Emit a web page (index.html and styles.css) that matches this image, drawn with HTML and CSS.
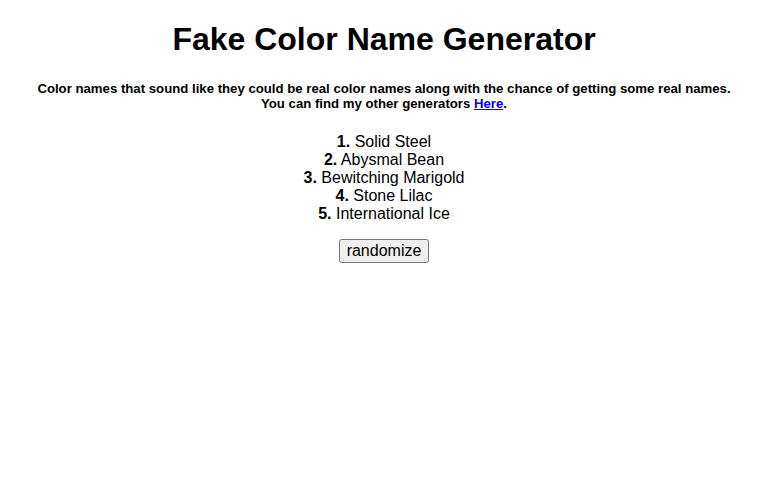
FILE: index.html
```html
<!DOCTYPE html>
<html lang="en">
<head>
  <meta charset="UTF-8">
  <meta name="viewport" content="width=device-width, initial-scale=1.0">
  <title>Fake Color Name Generator</title>
  <link rel="stylesheet" href="styles.css">
</head>
<body>
  <h1>Fake Color Name Generator</h1>
  <p class="intro">
    Color names that sound like they could be real color names along with the chance of getting some real names.<br>
    You can find my other generators <a href="#">Here</a>.
  </p>
  <div class="names" id="names">
    <div><b>1.</b> Solid Steel</div>
    <div><b>2.</b> Abysmal Bean</div>
    <div><b>3.</b> Bewitching Marigold</div>
    <div><b>4.</b> Stone Lilac</div>
    <div><b>5.</b> International Ice</div>
  </div>
  <button class="btn" id="randomize">randomize</button>
</body>
</html>
```

FILE: styles.css
```css
body {
  font-family: "Liberation Sans", Arial, sans-serif;
  text-align: center;
  color: #000;
  background: #fff;
  margin: 0 8px;
}
h1 {
  font-size: 32px;
  margin: 21px 0 23px;
}
.intro {
  font-size: 13.2px;
  font-weight: bold;
  line-height: 15px;
  margin: 0;
}
.intro a {
  color: #0000ee;
}
.names {
  font-size: 16px;
  line-height: 18px;
  margin: 22px 0 16px;
}
.btn {
  font-family: "Liberation Sans", Arial, sans-serif;
  font-size: 16px;
  padding: 1px 6px;
}
```
